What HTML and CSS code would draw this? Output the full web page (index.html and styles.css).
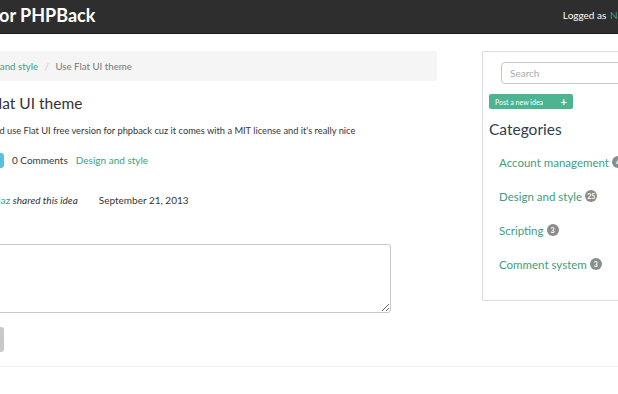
FILE: index.html
```html
<!DOCTYPE html>
<html lang="en">

<head>
    <meta charset="UTF-8">
    <meta name="viewport" content="width=device-width, initial-scale=1.0">
    <title>Use Flat UI theme - Feedback for PHPBack</title>
    <link rel="stylesheet" href="styles.css">
</head>

<body>
    <nav class="navbar">
        <div class="brand">Feedback for PHPBack</div>
        <div class="user">Logged as <a href="#">Nathan</a></div>
    </nav>

    <div class="page">
        <div class="main">
            <div class="breadcrumb">
                <a href="#">Design and style</a>
                <span class="sep">/</span>
                <span class="current">Use Flat UI theme</span>
            </div>

            <h3 class="idea-title">Use Flat UI theme</h3>
            <p class="idea-text">You should use Flat UI free version for phpback cuz it comes with a MIT license and it's really nice</p>

            <div class="idea-meta">
                <span class="votes">12 votes</span>
                <span class="comments">0 Comments</span>
                <a href="#">Design and style</a>
            </div>

            <div class="idea-author">
                <span><a href="#">Ivan Diaz</a> <em>shared this idea</em></span>
                <span class="date">September 21, 2013</span>
            </div>

            <textarea class="comment-box"></textarea>
            <button class="comment-button">Comment</button>
            <hr class="divider">
        </div>

        <div class="sidebar">
            <input class="search" type="text" placeholder="Search">
            <button class="post-button"><span>Post a new idea</span> <span class="plus">+</span></button>
            <h4 class="cat-title">Categories</h4>
            <ul class="cat-list">
                <li><a href="#">Account management</a> <span class="badge">4</span></li>
                <li><a href="#">Design and style</a> <span class="badge">25</span></li>
                <li><a href="#">Scripting</a> <span class="badge">3</span></li>
                <li><a href="#">Comment system</a> <span class="badge">3</span></li>
            </ul>
        </div>
    </div>
</body>

</html>
```

FILE: styles.css
```css
body {
    font-family: 'Lato', sans-serif;
    margin: 0;
    overflow: hidden;
    background: #fff;
    color: #363636;
    font-size: 10px;
}

a {
    color: #3d9e80;
    text-decoration: none;
}

.navbar {
    display: flex;
    align-items: center;
    justify-content: space-between;
    height: 30px;
    padding-bottom: 3px;
    background: #2e2e2e;
    border-bottom: 1px solid #1c1c1c;
    white-space: nowrap;
    overflow: hidden;
}

.brand {
    margin-left: -88px;
    font-size: 18px;
    font-weight: bold;
    color: #fff;
}

.user {
    margin-right: -24px;
    font-size: 10px;
    color: #fff;
}

.user a {
    margin-left: 1px;
}

.page {
    display: flex;
    gap: 45px;
    padding-top: 17px;
    margin-left: -40px;
    white-space: nowrap;
}

.main {
    width: 477px;
    flex-shrink: 0;
}

.breadcrumb {
    height: 30px;
    line-height: 30px;
    padding-left: 8px;
    background: #f5f5f5;
    border-radius: 3px;
    font-size: 9.7px;
}

.breadcrumb .sep {
    color: #ccc;
    margin: 0 4px;
}

.breadcrumb .current {
    color: #777;
}

.idea-title {
    margin: 12px 0 0;
    font-size: 15.5px;
    line-height: 20px;
    font-weight: normal;
    color: #333;
}

.idea-text {
    margin: 10px 0 0;
    font-size: 9.3px;
    line-height: 16px;
}

.idea-meta {
    display: flex;
    align-items: center;
    gap: 8px;
    margin-top: 13px;
    height: 16px;
}

.votes {
    display: inline-block;
    width: 44px;
    height: 15px;
    background: #5bc0de;
    border-radius: 3px;
    color: transparent;
}

.idea-author {
    display: flex;
    gap: 21px;
    margin-top: 24px;
    padding-left: 10px;
    line-height: 16px;
}

.idea-author em {
    color: #333;
}

.comment-box {
    display: block;
    box-sizing: border-box;
    width: 431px;
    height: 69px;
    margin-top: 36px;
    border: 1px solid #c8c8c8;
    border-radius: 3px;
}

.comment-button {
    display: block;
    width: 44px;
    height: 25px;
    margin-top: 14px;
    border: none;
    border-radius: 3px;
    background: #c8c8c8;
    color: transparent;
}

.divider {
    width: 700px;
    margin: 14px 0 0;
    border: 0;
    border-top: 1px solid #eee;
}

.sidebar {
    box-sizing: border-box;
    width: 170px;
    height: 250px;
    flex-shrink: 0;
    padding: 10px 6px;
    border: 1px solid #ddd;
}

.search {
    display: block;
    box-sizing: border-box;
    width: 140px;
    height: 22px;
    margin-left: 12px;
    padding: 0 8px;
    border: 1px solid #c8c8c8;
    border-radius: 4px;
    font-family: 'Lato', sans-serif;
    font-size: 10px;
}

.search::placeholder {
    color: #aaa;
}

.post-button {
    display: flex;
    align-items: center;
    justify-content: space-between;
    width: 84px;
    height: 15px;
    margin-top: 10px;
    padding: 0 6px;
    border: none;
    border-radius: 2px;
    background: #4db491;
    color: #fff;
    font-family: 'Lato', sans-serif;
    font-size: 7px;
}

.post-button .plus {
    font-size: 11px;
    font-weight: bold;
    line-height: 1;
}

.cat-title {
    margin: 10px 0 0;
    font-size: 15.5px;
    line-height: 20px;
    font-weight: normal;
    color: #2c3e50;
}

.cat-list {
    list-style: none;
    margin: 15px 0 0;
    padding: 0 0 0 10px;
}

.cat-list li {
    display: flex;
    align-items: center;
    gap: 3px;
    height: 16px;
    margin-bottom: 18px;
    font-size: 11.5px;
}

.badge {
    display: inline-block;
    min-width: 12px;
    height: 12px;
    padding: 0 2px;
    box-sizing: border-box;
    border-radius: 6px;
    background: #8c8c8c;
    color: #fff;
    font-size: 7px;
    font-weight: bold;
    line-height: 12px;
    text-align: center;
}
```
